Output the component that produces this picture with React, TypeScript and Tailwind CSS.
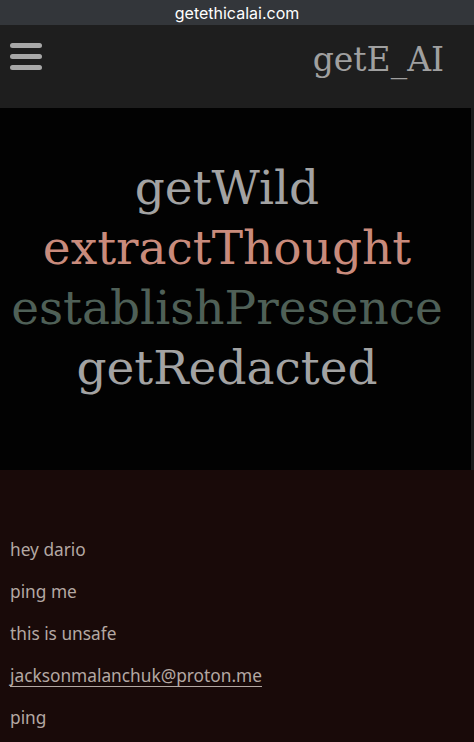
export default function App() {
  const lines = [
    { text: 'getWild', color: 'text-[#a3a3a3]' },
    { text: 'extractThought', color: 'text-[#c98b7c]' },
    { text: 'establishPresence', color: 'text-[#4f6057]' },
    { text: 'getRedacted', color: 'text-[#a3a3a3]' },
  ]
  const notes = ['hey dario', 'ping me', 'this is unsafe']

  return (
    <div className="min-h-[742px] w-full bg-[#190a09] overflow-hidden">
      {/* barre d'adresse */}
      <div className="h-[25px] bg-[#33363a] flex items-center justify-center">
        <span className="text-white text-[16px] leading-none font-['Inter',sans-serif]">getethicalai.com</span>
      </div>

      {/* header */}
      <header className="h-[83px] bg-[#1e1e1e] flex items-start justify-between pl-[10px] pr-[30px] pt-[18px]">
        <div className="flex flex-col gap-[6px] w-[32px]">
          <span className="h-[5px] rounded-full bg-[#a8a8a8]" />
          <span className="h-[5px] rounded-full bg-[#a8a8a8]" />
          <span className="h-[5px] rounded-full bg-[#a8a8a8]" />
        </div>
        <span className="text-[#a0a0a0] text-[33px] leading-none font-['DejaVu_Serif',serif]">getE_AI</span>
      </header>

      {/* hero */}
      <section className="h-[362px] bg-[#020202] flex border-r-[3px] border-[#1c1c1c]">
        <div className="flex-1 flex flex-col items-center pt-[50px] pr-[17px]">
          {lines.map((l) => (
            <div
              key={l.text}
              className={`${l.color} text-[47px] leading-[60px] font-['DejaVu_Serif',serif] whitespace-nowrap`}
            >
              {l.text}
            </div>
          ))}
        </div>
      </section>

      {/* messages */}
      <section className="pt-[68px] px-[10px] flex flex-col gap-[18px] text-[#b4a8a3] text-[17.3px] leading-[24px] font-['Noto_Sans',sans-serif]">
        {notes.map((n) => (
          <p key={n}>{n}</p>
        ))}
        <p>
          <a href="#" className="underline underline-offset-[4px] decoration-[1px]">
            jacksonmalanchuk@proton.me
          </a>
        </p>
        <p>ping</p>
      </section>
    </div>
  )
}
